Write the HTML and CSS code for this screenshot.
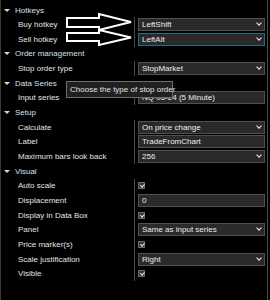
FILE: index.html
```html
<!DOCTYPE html>
<html lang="en">
<head>
  <meta charset="UTF-8" />
  <title>Properties</title>
  <link rel="stylesheet" href="styles.css">
</head>
<body>
  <div class="panel">
    <div class="cat"><span class="tri"></span>Hotkeys</div>
    <div class="row"><div class="name">Buy hotkey</div><div class="val"><div class="box drop">LeftShift</div></div></div>
    <div class="row"><div class="name">Sell hotkey</div><div class="val"><div class="box drop focus">LeftAlt</div></div></div>

    <div class="cat"><span class="tri"></span>Order management</div>
    <div class="row"><div class="name">Stop order type</div><div class="val"><div class="box drop">StopMarket</div></div></div>

    <div class="cat"><span class="tri"></span>Data Series</div>
    <div class="row"><div class="name">Input series</div><div class="val"><div class="box">NQ 06-24 (5 Minute)</div></div></div>

    <div class="cat"><span class="tri"></span>Setup</div>
    <div class="row"><div class="name">Calculate</div><div class="val"><div class="box drop">On price change</div></div></div>
    <div class="row"><div class="name">Label</div><div class="val"><div class="box">TradeFromChart</div></div></div>
    <div class="row"><div class="name">Maximum bars look back</div><div class="val"><div class="box drop">256</div></div></div>

    <div class="cat"><span class="tri"></span>Visual</div>
    <div class="row"><div class="name">Auto scale</div><div class="val"><span class="check"></span></div></div>
    <div class="row"><div class="name">Displacement</div><div class="val"><div class="box">0</div></div></div>
    <div class="row"><div class="name">Display in Data Box</div><div class="val"><span class="check"></span></div></div>
    <div class="row"><div class="name">Panel</div><div class="val"><div class="box drop">Same as input series</div></div></div>
    <div class="row"><div class="name">Price marker(s)</div><div class="val"><span class="check"></span></div></div>
    <div class="row"><div class="name">Scale justification</div><div class="val"><div class="box drop">Right</div></div></div>
    <div class="row"><div class="name">Visible</div><div class="val"><span class="check"></span></div></div>
  </div>

  <div class="tip">Choose the type of stop order</div>

  <svg class="arrows" width="140" height="50" viewBox="0 0 140 50">
    <path d="M67 18 H99 V14 L131 22 L99 30 V27 H67 Z" />
    <path d="M67 33 H99 V30 L131 37.5 L99 45 V41 H67 Z" />
  </svg>
</body>
</html>
```

FILE: styles.css
```css
body {
  margin: 0;
  background-color: #000;
  font-family: "Liberation Sans", Arial, sans-serif;
  font-size: 8px;
  color: #e4e4e4;
}

.panel {
  width: 268px;
  height: 300px;
  padding-top: 2.7px;
  box-sizing: border-box;
  border-left: 1px solid #3a3a3a;
  border-right: 1px solid #4a4a4a;
}

.cat,
.row {
  height: 14.67px;
  display: flex;
  align-items: center;
}

.cat {
  padding-left: 3px;
  color: #d4e0f2;
}

.tri {
  width: 0;
  height: 0;
  border-left: 3px solid transparent;
  border-right: 3px solid transparent;
  border-top: 3px solid #d8d8d8;
  margin-right: 5px;
}

.name {
  width: 116px;
  padding-left: 17px;
  white-space: nowrap;
}

.val {
  flex: 1;
  height: 100%;
  display: flex;
  align-items: center;
  padding-left: 3px;
  border-left: 1px solid #4a4a4a;
}

.box {
  position: relative;
  width: 127px;
  height: 13px;
  box-sizing: border-box;
  background-color: #2a2a2a;
  border: 1px solid #505050;
  padding-left: 3px;
  line-height: 11px;
  color: #ececec;
}

.box.focus {
  border-color: #1f6f86;
}

.drop::after {
  content: "";
  position: absolute;
  right: 3px;
  top: 2px;
  width: 3px;
  height: 3px;
  border-right: 1.5px solid #f0f0f0;
  border-bottom: 1.5px solid #f0f0f0;
  transform: rotate(45deg);
}

.check {
  position: relative;
  width: 7px;
  height: 7px;
  box-sizing: border-box;
  background-color: #3a3a3a;
  border: 1px solid #6a6a6a;
}

.check::after {
  content: "";
  position: absolute;
  left: 1.5px;
  top: 0;
  width: 1.5px;
  height: 3px;
  border-right: 1px solid #e8e8e8;
  border-bottom: 1px solid #e8e8e8;
  transform: rotate(45deg);
}

.tip {
  position: absolute;
  left: 66px;
  top: 81px;
  width: 107px;
  height: 17px;
  box-sizing: border-box;
  padding-left: 3px;
  line-height: 15px;
  background-color: #202020;
  border: 1px solid #6e6e6e;
  color: #e0e0e0;
  white-space: nowrap;
}

.arrows {
  position: absolute;
  left: 0;
  top: 0;
}

.arrows path {
  fill: #000;
  stroke: #fff;
  stroke-width: 2;
  stroke-linejoin: miter;
}
```
